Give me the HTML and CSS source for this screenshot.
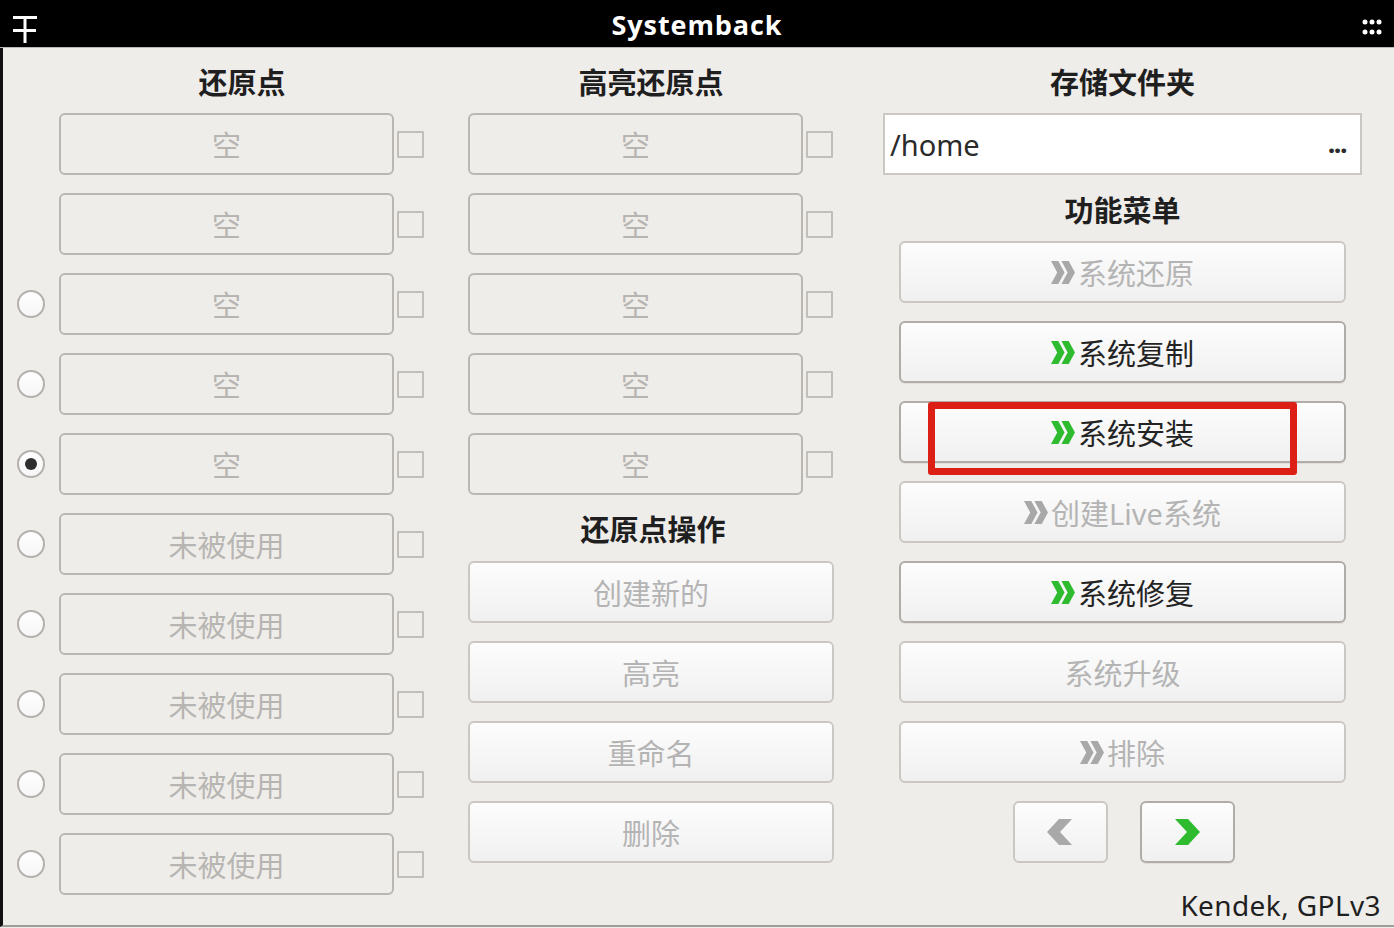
FILE: index.html
```html
<!DOCTYPE html>
<html lang="zh-CN">
<head>
<meta charset="utf-8">
<title>Systemback</title>
<link rel="stylesheet" href="styles.css">
</head>
<body>
<div class="window">
  <header class="titlebar">
    <svg class="tb-menu" width="24" height="28" viewBox="0 0 24 28"><rect x="0" y="0" width="24" height="3" fill="#fff"/><rect x="0" y="13" width="23" height="3" fill="#fff"/><rect x="10.5" y="3" width="3" height="24" fill="#fff"/></svg>
    <div class="tb-title">Systemback</div>
    <svg class="tb-dots" width="20" height="16" viewBox="0 0 20 16"><g fill="#fff"><circle cx="3" cy="3" r="2.5"/><circle cx="10" cy="3" r="2.5"/><circle cx="17" cy="3" r="2.5"/><circle cx="3" cy="13" r="2.5"/><circle cx="10" cy="13" r="2.5"/><circle cx="17" cy="13" r="2.5"/></g></svg>
  </header>

  <main class="content">
    <div class="columns">
      <section class="col col-left">
        <h2 class="col-title indent">还原点</h2>
        <div class="rows">
          <div class="row"><span class="radio-slot"></span><div class="field">空</div><span class="check"></span></div>
          <div class="row"><span class="radio-slot"></span><div class="field">空</div><span class="check"></span></div>
          <div class="row"><span class="radio-slot radio"></span><div class="field">空</div><span class="check"></span></div>
          <div class="row"><span class="radio-slot radio"></span><div class="field">空</div><span class="check"></span></div>
          <div class="row"><span class="radio-slot radio on"></span><div class="field">空</div><span class="check"></span></div>
          <div class="row"><span class="radio-slot radio"></span><div class="field">未被使用</div><span class="check"></span></div>
          <div class="row"><span class="radio-slot radio"></span><div class="field">未被使用</div><span class="check"></span></div>
          <div class="row"><span class="radio-slot radio"></span><div class="field">未被使用</div><span class="check"></span></div>
          <div class="row"><span class="radio-slot radio"></span><div class="field">未被使用</div><span class="check"></span></div>
          <div class="row"><span class="radio-slot radio"></span><div class="field">未被使用</div><span class="check"></span></div>
        </div>
      </section>

      <section class="col col-mid">
        <h2 class="col-title">高亮还原点</h2>
        <div class="rows">
          <div class="row"><div class="field">空</div><span class="check"></span></div>
          <div class="row"><div class="field">空</div><span class="check"></span></div>
          <div class="row"><div class="field">空</div><span class="check"></span></div>
          <div class="row"><div class="field">空</div><span class="check"></span></div>
          <div class="row"><div class="field">空</div><span class="check"></span></div>
        </div>
        <h2 class="sub-title ops-title">还原点操作</h2>
        <div class="rows">
          <button class="btn">创建新的</button>
          <button class="btn">高亮</button>
          <button class="btn">重命名</button>
          <button class="btn">删除</button>
        </div>
      </section>

      <section class="col col-right">
        <h2 class="col-title">存储文件夹</h2>
        <div class="path"><span class="path-text">/home</span><span class="path-more">...</span></div>
        <h2 class="sub-title menu-title">功能菜单</h2>
        <div class="rows menu">
          <button class="btn"><svg class="dbl" width="25" height="25" viewBox="0 0 24 24"><g fill="#a8a8a8"><polygon points="0,1 7,1 13,12 7,23 0,23 6,12"/><polygon points="10,1 17,1 23,12 17,23 10,23 16,12"/></g></svg>系统还原</button>
          <button class="btn on"><svg class="dbl" width="25" height="25" viewBox="0 0 24 24"><g fill="#2fbb2f"><polygon points="0,1 7,1 13,12 7,23 0,23 6,12"/><polygon points="10,1 17,1 23,12 17,23 10,23 16,12"/></g></svg>系统复制</button>
          <button class="btn on"><svg class="dbl" width="25" height="25" viewBox="0 0 24 24"><g fill="#2fbb2f"><polygon points="0,1 7,1 13,12 7,23 0,23 6,12"/><polygon points="10,1 17,1 23,12 17,23 10,23 16,12"/></g></svg>系统安装</button>
          <button class="btn"><svg class="dbl" width="25" height="25" viewBox="0 0 24 24"><g fill="#a8a8a8"><polygon points="0,1 7,1 13,12 7,23 0,23 6,12"/><polygon points="10,1 17,1 23,12 17,23 10,23 16,12"/></g></svg>创建Live系统</button>
          <button class="btn on"><svg class="dbl" width="25" height="25" viewBox="0 0 24 24"><g fill="#2fbb2f"><polygon points="0,1 7,1 13,12 7,23 0,23 6,12"/><polygon points="10,1 17,1 23,12 17,23 10,23 16,12"/></g></svg>系统修复</button>
          <button class="btn">系统升级</button>
          <button class="btn"><svg class="dbl" width="25" height="25" viewBox="0 0 24 24"><g fill="#a8a8a8"><polygon points="0,1 7,1 13,12 7,23 0,23 6,12"/><polygon points="10,1 17,1 23,12 17,23 10,23 16,12"/></g></svg>排除</button>
          <div class="nav">
            <button class="btn nav-btn"><svg width="30" height="26" viewBox="0 0 30 26"><polygon fill="#a9a9a9" points="14,0 27,0 15,13 27,26 14,26 2,13"/></svg></button>
            <button class="btn nav-btn on"><svg width="30" height="26" viewBox="0 0 30 26"><polygon fill="#2fbb2f" points="3,0 16,0 28,13 16,26 3,26 15,13"/></svg></button>
          </div>
        </div>
      </section>
    </div>
    <footer class="footer">Kendek, GPLv3</footer>
  </main>

  <div class="highlight"></div>
</div>
</body>
</html>
```

FILE: styles.css
```css
* {
  box-sizing: border-box;
}

html,
body {
  margin: 0;
  padding: 0;
}

body {
  width: 1394px;
  height: 928px;
  overflow: hidden;
  background: #efedea;
  font-family: "Noto Sans", "Noto Sans CJK SC", sans-serif;
}

.window {
  position: relative;
  display: flex;
  flex-direction: column;
  height: 928px;
}

/* ---------- title bar ---------- */
.titlebar {
  height: 48px;
  flex: none;
  background: #000;
  border-bottom: 1px solid #bdb9b4;
  display: grid;
  grid-template-columns: 1fr auto 1fr;
  align-items: start;
  color: #fff;
}

.tb-menu {
  margin: 16px 0 0 13px;
}

.tb-title {
  font-family: "Open Sans", "Noto Sans", sans-serif;
  font-weight: 700;
  font-size: 27px;
  line-height: 50px;
  letter-spacing: 0.9px;
  color: #fff;
}

.tb-dots {
  justify-self: end;
  margin: 19px 12px 0 0;
}

/* ---------- content ---------- */
.content {
  height: 879px;
  flex: none;
  border-left: 3px solid #111;
  border-bottom: 2px solid #a19e9a;
  padding-left: 14px;
  display: flex;
  flex-direction: column;
}

.columns {
  display: flex;
  align-items: flex-start;
}

.col {
  display: flex;
  flex-direction: column;
}

.col-left {
  width: 407px;
}

.col-mid {
  width: 366px;
  margin-left: 44px;
}

.col-right {
  width: 479px;
  margin-left: 49px;
}

.col-title,
.sub-title {
  margin: 0;
  font-size: 29px;
  font-weight: 700;
  line-height: 36px;
  text-align: center;
  color: #1f1f1f;
}

.col-title {
  height: 65px;
  padding-top: 17px;
}

.col-title.indent {
  padding-left: 43px;
}

.ops-title {
  height: 66px;
  padding-top: 17px;
  padding-left: 4px;
}

.menu-title {
  height: 66px;
  padding-top: 18px;
}

.rows {
  display: flex;
  flex-direction: column;
  gap: 18px;
}

.row {
  display: flex;
  align-items: center;
  height: 62px;
}

.radio-slot {
  width: 28px;
  height: 28px;
  margin-right: 14px;
  flex: none;
}

.radio {
  border-radius: 50%;
  border: 2px solid #b4b1ac;
  background: linear-gradient(#ffffff, #f6f6f6);
  display: flex;
  align-items: center;
  justify-content: center;
}

.radio.on::after {
  content: "";
  width: 12px;
  height: 12px;
  border-radius: 50%;
  background: #2e2e2e;
}

.field {
  width: 335px;
  height: 62px;
  flex: none;
  border: 2px solid #bab7b2;
  border-radius: 6px;
  display: flex;
  align-items: center;
  justify-content: center;
  color: #b7b5b2;
  font-size: 29px;
}

.check {
  width: 27px;
  height: 27px;
  flex: none;
  margin-left: 3px;
  border: 2px solid #c2bfba;
  border-radius: 1px;
}

/* ---------- buttons ---------- */
.btn {
  height: 62px;
  width: 100%;
  margin: 0;
  padding: 0;
  border: 2px solid #cbc8c4;
  border-radius: 6px;
  background: linear-gradient(#fdfdfd, #f0f0f0);
  display: flex;
  align-items: center;
  justify-content: center;
  gap: 2px;
  font-family: "Noto Sans", "Noto Sans CJK SC", sans-serif;
  font-size: 29px;
  color: #b4b4b4;
}

.btn.on {
  color: #232323;
  border-color: #b0ada9;
  box-shadow: 0 1px 0 rgba(0, 0, 0, 0.06);
}

.dbl {
  flex: none;
  margin-top: 1px;
}

/* ---------- right column ---------- */
.path {
  height: 62px;
  background: #fff;
  border: 2px solid #cbc8c4;
  display: flex;
  align-items: center;
  justify-content: space-between;
  padding: 0 14px 0 5px;
}

.path-text {
  font-size: 29px;
  color: #2b2b2b;
}

.path-more {
  font-size: 27px;
  font-weight: 700;
  letter-spacing: -1.5px;
  color: #2b2b2b;
  margin-top: -4px;
}

.menu {
  padding: 0 16px;
}

.nav {
  display: flex;
  justify-content: center;
  gap: 32px;
  padding-left: 2px;
}

.nav-btn {
  width: 95px;
}

/* ---------- footer ---------- */
.footer {
  margin-top: -5px;
  height: 30px;
  line-height: 30px;
  text-align: right;
  padding-right: 13px;
  font-size: 28px;
  letter-spacing: 0.4px;
  color: #1f1f1f;
}

/* ---------- annotation overlay ---------- */
.highlight {
  position: absolute;
  left: 928px;
  top: 402px;
  width: 369px;
  height: 73px;
  border: 7px solid #dd2016;
  border-radius: 3px;
}
```
